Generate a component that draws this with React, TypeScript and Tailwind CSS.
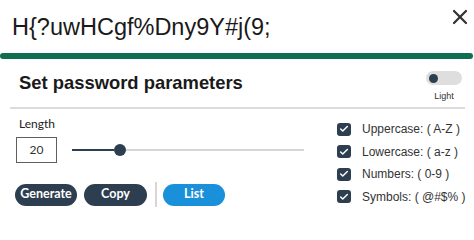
import { Check, X } from 'lucide-react';

const options = [
  'Uppercase: ( A-Z )',
  'Lowercase: ( a-z )',
  'Numbers: ( 0-9 )',
  'Symbols: ( @#$% )',
];

const App = () => {
  return (
    <div className="w-[474px] h-[212px] bg-white overflow-hidden text-[#222]">
      {/* Password output */}
      <div className="h-[53px] flex items-start justify-between">
        <div className="pl-[12px] pt-[14px] text-[23.5px] leading-[26px] font-['Liberation_Sans',Arial,sans-serif] text-[#1a1a1a]">
          H{'{'}?uwHCgf%Dny9Y#j(9;
        </div>
        <X size={24} strokeWidth={2.25} className="mt-[5px] mr-[2px] text-[#333]" />
      </div>
      <div className="h-[6px] w-[473px] rounded-full bg-[#0e6e4f]" />

      {/* Title row */}
      <div className="mt-[12px] h-[36px] flex items-start justify-between">
        <h2 className="pl-[19px] mt-[2px] text-[18.4px] leading-[20px] font-bold font-['Liberation_Sans',Arial,sans-serif] text-[#1a1a1a]">
          Set password parameters
        </h2>
        <div className="mr-[12px] flex flex-col items-center">
          <div className="w-[36px] h-[14px] rounded-full bg-[#dedede] flex items-center pl-[2px]">
            <div className="w-[9px] h-[9px] rounded-full bg-[#2c3e50] ml-[1px]" />
          </div>
          <span className="mt-[6px] text-[9px] leading-[10px] font-['Liberation_Sans',Arial,sans-serif] text-[#333]">
            Light
          </span>
        </div>
      </div>
      <div className="ml-[10px] w-[455px] h-[2px] bg-[#dcdcdc]" />

      {/* Controls */}
      <div className="flex">
        <div className="w-[337px] pl-[16px] font-['Lato',sans-serif]">
          <div className="mt-[8px] pl-[3px] text-[12px] leading-[14px] text-[#222]">Length</div>
          <div className="mt-[6px] flex items-center">
            <div className="w-[41px] h-[26px] border border-[#5f5f5f] flex items-center justify-center text-[12px] text-[#333]">
              20
            </div>
            <div className="ml-[15px] w-[232px] flex items-center">
              <div className="w-[42px] h-[2px] bg-[#2c3e50]" />
              <div className="w-[12px] h-[12px] rounded-full bg-[#2c3e50]" />
              <div className="flex-1 h-[2px] bg-[#d6d6d6]" />
            </div>
          </div>
          <div className="mt-[19px] -ml-[1px] flex items-center text-[12.5px] font-bold text-white">
            <button className="w-[62px] h-[22px] rounded-full bg-[#2c3e50] leading-none">Generate</button>
            <button className="ml-[7px] w-[63px] h-[22px] rounded-full bg-[#2c3e50] leading-none">Copy</button>
            <div className="ml-[8px] w-[2px] h-[25px] bg-[#d6d6d6]" />
            <button className="ml-[6px] w-[62px] h-[22px] rounded-full bg-[#1a8fda] leading-none">List</button>
          </div>
        </div>

        <div className="pt-[9px] flex flex-col">
          {options.map((label) => (
            <div key={label} className="h-[22.5px] flex items-center">
              <div className="w-[14px] h-[13px] rounded-[3px] bg-[#2c3e50] flex items-center justify-center">
                <Check size={10} strokeWidth={3.5} className="text-white" />
              </div>
              <span className="ml-[11px] text-[12px] font-['Liberation_Sans',Arial,sans-serif] text-[#333]">
                {label}
              </span>
            </div>
          ))}
        </div>
      </div>
    </div>
  );
};

export default App;
